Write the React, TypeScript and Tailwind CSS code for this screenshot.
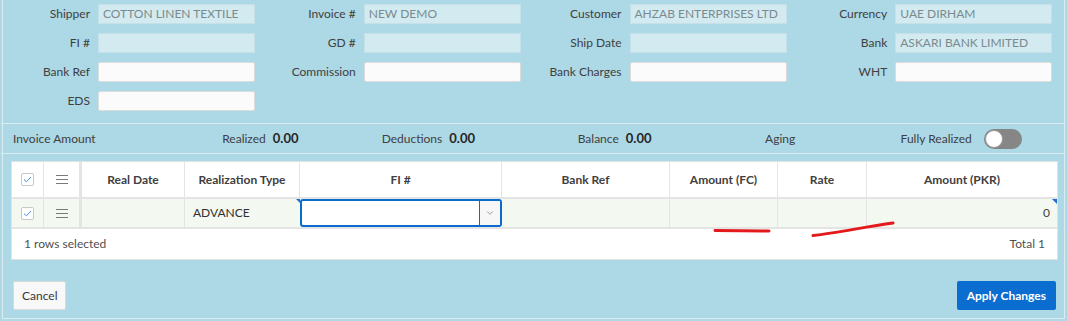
import React from 'react'
import { ChevronDown } from 'lucide-react'

const font = { fontFamily: 'Lato, "Open Sans", sans-serif' }

interface FieldProps {
  label: string
  value?: string
  readOnly?: boolean
}

const Field: React.FC<FieldProps> = ({ label, value, readOnly }) => {
  return (
    <div className="flex items-center w-[267px]">
      <div className="w-[89px] text-right text-[12px] text-[#404040]">{label}</div>
      <div
        className={
          readOnly
            ? 'ml-2 w-[157px] h-5 bg-[#d2eaf0] border border-[#c4e1e9] px-[4px] text-[12px] leading-[18px] text-[#7a8a8e] truncate'
            : 'ml-2 w-[157px] h-5 bg-[#fbfbfb] border border-[#dcdcdc] rounded-[2px]'
        }
      >
        {value}
      </div>
    </div>
  )
}

const Stat: React.FC<{ label: string; value?: string; toggle?: boolean }> = ({ label, value, toggle }) => {
  return (
    <div className="flex items-center">
      <div className="w-1/2 text-right text-[12px] text-[#404040]">{label}</div>
      <div className="w-1/2 pl-[7px] flex items-center">
        {value && <span className="text-[13px] font-bold text-[#262626]">{value}</span>}
        {toggle && (
          <div className="ml-[5px] w-[38px] h-5 rounded-full bg-[#868686] flex items-center p-[1px]">
            <div className="w-[18px] h-[18px] rounded-full bg-white border border-[#9a9a9a]" />
          </div>
        )}
      </div>
    </div>
  )
}

const CheckBox = () => (
  <div className="w-[13px] h-[13px] border border-[#c9c9c9] rounded-[2px] bg-white flex items-center justify-center">
    <svg width="9" height="7" viewBox="0 0 9 7">
      <path d="M1 3.5 L3.4 5.8 L8 1" stroke="#4a90e2" strokeWidth="1" fill="none" />
    </svg>
  </div>
)

const Handle = () => (
  <svg width="12" height="9" viewBox="0 0 12 9">
    <path d="M0 0.5h12M0 4.5h12M0 8.5h12" stroke="#7a7a7a" strokeWidth="1" />
  </svg>
)

const cols = 'grid grid-cols-[32px_38px_103px_115px_202px_168px_108px_89px_1fr]'

export default function App() {
  return (
    <div className="w-[1067px] h-[321px] bg-[#add8e5] overflow-hidden" style={font}>
      <div className="relative mx-[2px] h-[319px] border-x border-b border-[#dcedf2]">
        <div className="pt-[4px] flex flex-col gap-[9px] -ml-[2px]">
          <div className="flex">
            <Field label="Shipper" value="COTTON LINEN TEXTILE" readOnly />
            <Field label="Invoice #" value="NEW DEMO" readOnly />
            <Field label="Customer" value="AHZAB ENTERPRISES LTD" readOnly />
            <Field label="Currency" value="UAE DIRHAM" readOnly />
          </div>
          <div className="flex">
            <Field label="FI #" readOnly />
            <Field label="GD #" readOnly />
            <Field label="Ship Date" readOnly />
            <Field label="Bank" value="ASKARI BANK LIMITED" readOnly />
          </div>
          <div className="flex">
            <Field label="Bank Ref" />
            <Field label="Commission" />
            <Field label="Bank Charges" />
            <Field label="WHT" />
          </div>
          <div className="flex">
            <Field label="EDS" />
          </div>
        </div>

        <div className="mt-[12px] h-[31px] border-y border-[#dcedf2] grid grid-cols-6 items-center -ml-[2px] pr-[4px]">
          <div className="pl-[12px] text-[12px] text-[#404040]">Invoice Amount</div>
          <Stat label="Realized" value="0.00" />
          <Stat label="Deductions" value="0.00" />
          <Stat label="Balance" value="0.00" />
          <Stat label="Aging" />
          <Stat label="Fully Realized" toggle />
        </div>

        <div className="mt-[7px] ml-[8px] w-[1047px] border border-[#e2e2e2] bg-white">
          <div className={`${cols} h-[37px] border-b-2 border-[#e4e4e4] text-[12px] font-bold text-[#404040]`}>
            <div className="flex items-center justify-center border-r border-[#e4e4e4]">
              <CheckBox />
            </div>
            <div className="flex items-center justify-center border-r-[3px] border-[#e4e4e4]">
              <Handle />
            </div>
            <div className="flex items-center justify-center border-r border-[#e4e4e4]">Real Date</div>
            <div className="flex items-center justify-center border-r border-[#e4e4e4]">Realization Type</div>
            <div className="flex items-center justify-center border-r border-[#e4e4e4]">FI #</div>
            <div className="flex items-center justify-center border-r border-[#e4e4e4]">Bank Ref</div>
            <div className="flex items-center justify-center border-r border-[#e4e4e4]">Amount (FC)</div>
            <div className="flex items-center justify-center border-r border-[#e4e4e4]">Rate</div>
            <div className="flex items-center justify-center">Amount (PKR)</div>
          </div>
          <div className={`${cols} h-[30px] border-b-2 border-[#e4e4e4] text-[12px] text-[#303030]`}>
            <div className="flex items-center justify-center border-r border-[#e4e4e4] bg-[#f3f8f1]">
              <CheckBox />
            </div>
            <div className="flex items-center justify-center border-r-[3px] border-[#e4e4e4] bg-[#f3f8f1]">
              <Handle />
            </div>
            <div className="border-r border-[#e4e4e4] bg-[#f3f8f1]" />
            <div className="relative flex items-center pl-[8px] bg-[#f3f8f1]">
              ADVANCE
              <span className="absolute right-0 top-0 w-0 h-0 border-t-[4px] border-l-[4px] border-t-[#1a6fd0] border-l-transparent" />
            </div>
            <div className="flex h-[28px] border-2 border-[#0a6bcf] rounded-[3px] bg-white">
              <div className="flex-1" />
              <div className="w-[21px] border-l border-[#0a6bcf] bg-[#f7f7f7] flex items-center justify-center">
                <ChevronDown className="w-[10px] h-[10px] text-[#666]" strokeWidth={1.5} />
              </div>
            </div>
            <div className="border-r border-[#e4e4e4] bg-[#f3f8f1]" />
            <div className="border-r border-[#e4e4e4] bg-[#f3f8f1]" />
            <div className="border-r border-[#e4e4e4] bg-[#f3f8f1]" />
            <div className="relative flex items-center justify-end pr-[7px] bg-[#f3f8f1] text-[#404040]">
              0
              <span className="absolute right-0 top-0 w-0 h-0 border-t-[5px] border-l-[5px] border-t-[#1a6fd0] border-l-transparent" />
            </div>
          </div>
          <div className="h-[30px] flex items-center justify-between px-[12px] text-[12px] text-[#505050]">
            <span>1 rows selected</span>
            <span>Total 1</span>
          </div>
        </div>

        <div className="mt-[21px] flex justify-between pl-[10px] pr-[8px]">
          <button className="h-[29px] px-[8px] bg-[#f8f8f8] border border-[#dadada] rounded-[2px] text-[12px] text-[#383838]">
            Cancel
          </button>
          <button className="h-[29px] px-[10px] bg-[#0b6dd0] rounded-[2px] text-[12px] font-bold text-white">
            Apply Changes
          </button>
        </div>

        <svg className="absolute left-0 top-0 pointer-events-none" width="1067" height="321">
          <path d="M712 230.5 L766 231" stroke="#e3191c" strokeWidth="3" strokeLinecap="round" fill="none" />
          <path d="M810 235.5 C 835 233, 860 227, 890 223" stroke="#e3191c" strokeWidth="3" strokeLinecap="round" fill="none" />
        </svg>
      </div>
    </div>
  )
}
